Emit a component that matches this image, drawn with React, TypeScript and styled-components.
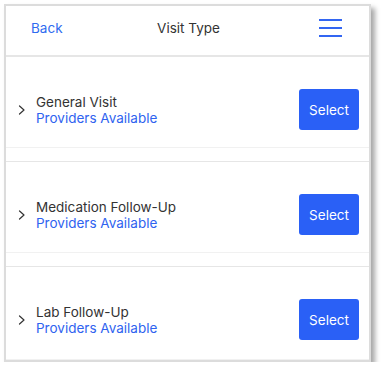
import React from "react";
import styled, { createGlobalStyle } from "styled-components";

const Global = createGlobalStyle`
  html, body { margin: 0; padding: 0; background: #ffffff; }
  body { font-family: Inter, "Noto Sans", Arial, sans-serif; -webkit-font-smoothing: antialiased; }
  * { box-sizing: border-box; }
`;

const Card = styled.div`
  margin: 4px 0 0 4px;
  width: 367px;
  border: 2px solid #dcdcdc;
  background: #ffffff;
  box-shadow: 4px 4px 5px rgba(0, 0, 0, 0.35);
`;

const Header = styled.header`
  height: 51px;
  display: grid;
  grid-template-columns: 1fr auto 1fr;
  align-items: center;
  padding: 0 27px 6px 25px;
  border-bottom: 2px solid #e6e6e6;
`;

const BackLink = styled.a`
  justify-self: start;
  color: #2f6bf0;
  font-size: 13.5px;
  cursor: pointer;
`;

const Title = styled.h1`
  margin: 0 0 0 4px;
  font-size: 13.5px;
  font-weight: 400;
  color: #333333;
`;

const MenuButton = styled.button`
  justify-self: end;
  border: 0;
  background: none;
  padding: 0;
  width: 23px;
  height: 18px;
  display: flex;
  flex-direction: column;
  justify-content: space-between;
  cursor: pointer;
`;

const MenuBar = styled.span`
  display: block;
  height: 2px;
  background: #3366f2;
`;

const Block = styled.section<{ $first?: boolean; $last?: boolean }>`
  border-top: ${(p) => (p.$first ? "0" : "1px solid #e6e6e6")};
  margin-bottom: ${(p) => (p.$last ? "0" : "13px")};
`;

const Row = styled.div<{ $last?: boolean }>`
  display: flex;
  align-items: center;
  padding: 32px 10px ${(p) => (p.$last ? "19px" : "17px")} 12px;
  border-bottom: 1px solid #f1f1f1;
`;

const Chevron = styled.svg`
  flex: none;
  width: 8px;
  height: 10px;
  margin: 0 10px 0 0;
`;

const Texts = styled.div`
  flex: 1;
  display: flex;
  flex-direction: column;
`;

const ItemTitle = styled.div`
  font-size: 13.5px;
  line-height: 16px;
  color: #333333;
`;

const ItemSub = styled.div`
  font-size: 13.5px;
  line-height: 16px;
  color: #2f63f0;
`;

const SelectButton = styled.button`
  flex: none;
  width: 60px;
  height: 41px;
  border: 0;
  border-radius: 3px;
  background: #2a60f6;
  color: #ffffff;
  font-family: inherit;
  font-size: 13.5px;
  cursor: pointer;
`;

const items = ["General Visit", "Medication Follow-Up", "Lab Follow-Up"];

export default function App() {
  return (
    <>
      <Global />
      <Card>
        <Header>
          <BackLink>Back</BackLink>
          <Title>Visit Type</Title>
          <MenuButton aria-label="Menu">
            <MenuBar />
            <MenuBar />
            <MenuBar />
          </MenuButton>
        </Header>
        {items.map((name, i) => {
          const last = i === items.length - 1;
          return (
            <Block key={name} $first={i === 0} $last={last}>
              <Row $last={last}>
                <Chevron viewBox="0 0 8 10">
                  <path d="M1.5 1 L6 5 L1.5 9" fill="none" stroke="#333" strokeWidth="1.2" strokeLinecap="round" strokeLinejoin="round" />
                </Chevron>
                <Texts>
                  <ItemTitle>{name}</ItemTitle>
                  <ItemSub>Providers Available</ItemSub>
                </Texts>
                <SelectButton>Select</SelectButton>
              </Row>
            </Block>
          );
        })}
      </Card>
    </>
  );
}
